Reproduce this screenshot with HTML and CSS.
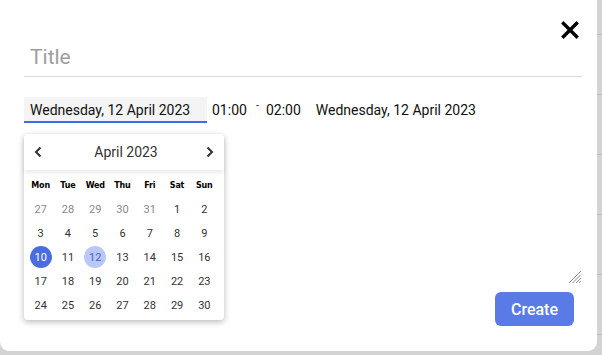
FILE: index.html
```html
<!DOCTYPE html>
<html>
<head>
<meta charset="utf-8">
<link rel="stylesheet" href="styles.css">
</head>
<body>
<div class="modal">
  <div class="top">
    <svg class="close" width="18" height="18" viewBox="0 0 18 18"><path d="M2.5 2.5 L15.5 15.5 M15.5 2.5 L2.5 15.5" stroke="#000" stroke-width="3.4" stroke-linecap="square"/></svg>
  </div>
  <div class="title">Title</div>
  <div class="daterow">
    <div class="dateinput">Wednesday, 12 April 2023</div>
    <span class="time">01:00</span>
    <span class="dash">-</span>
    <span class="time">02:00</span>
    <span class="enddate">Wednesday, 12 April 2023</span>
  </div>
  <div class="body">
    <textarea class="desc"></textarea>
    <svg class="grip" width="14" height="14" viewBox="0 0 14 14"><path d="M13 1 L1 13 M13 4.5 L4.5 13 M13 8 L8 13 M13 11 L11 13" stroke="#8a8a8a" stroke-width="1"/></svg>
    <div class="cal">
      <div class="calhead">
        <svg width="8" height="12" viewBox="0 0 8 12"><path d="M6.5 1.5 L2 6 L6.5 10.5" fill="none" stroke="#333" stroke-width="2"/></svg>
        <span class="month">April 2023</span>
        <svg width="8" height="12" viewBox="0 0 8 12"><path d="M1.5 1.5 L6 6 L1.5 10.5" fill="none" stroke="#333" stroke-width="2"/></svg>
      </div>
      <div class="grid">
        <span class="wd">Mon</span><span class="wd">Tue</span><span class="wd">Wed</span><span class="wd">Thu</span><span class="wd">Fri</span><span class="wd">Sat</span><span class="wd">Sun</span>
        <span class="d o">27</span><span class="d o">28</span><span class="d o">29</span><span class="d o">30</span><span class="d o">31</span><span class="d">1</span><span class="d">2</span>
        <span class="d">3</span><span class="d">4</span><span class="d">5</span><span class="d">6</span><span class="d">7</span><span class="d">8</span><span class="d">9</span>
        <span class="d"><i class="sel">10</i></span><span class="d">11</span><span class="d"><i class="cur">12</i></span><span class="d">13</span><span class="d">14</span><span class="d">15</span><span class="d">16</span>
        <span class="d">17</span><span class="d">18</span><span class="d">19</span><span class="d">20</span><span class="d">21</span><span class="d">22</span><span class="d">23</span>
        <span class="d">24</span><span class="d">25</span><span class="d">26</span><span class="d">27</span><span class="d">28</span><span class="d">29</span><span class="d">30</span>
      </div>
    </div>
  </div>
  <div class="actions">
    <button class="create">Create</button>
  </div>
</div>
</body>
</html>
```

FILE: styles.css
```css
html, body {
  margin: 0;
  padding: 0;
}
body {
  width: 602px;
  height: 355px;
  overflow: hidden;
  font-family: Roboto, "Liberation Sans", sans-serif;
  background-color: #d3d3d3;
  background-image: repeating-linear-gradient(to bottom, transparent 0, transparent 34px, #bcbcbc 34px, #bcbcbc 35px, transparent 35px, transparent 60px);
}
.modal {
  width: 597px;
  height: 351px;
  background: #fff;
  border-radius: 0 0 9px 9px;
  box-sizing: border-box;
  padding: 20px 15px 0 24px;
  display: flex;
  flex-direction: column;
}
.top {
  display: flex;
  justify-content: flex-end;
  height: 18px;
  padding-right: 3px;
}
.close {
  display: block;
  margin-top: 1px;
}
.title {
  height: 39px;
  box-sizing: border-box;
  border-bottom: 1px solid #dcdcdc;
  padding-left: 6px;
  padding-top: 7px;
  font-size: 21px;
  line-height: 24px;
  color: #9e9e9e;
}
.daterow {
  display: flex;
  align-items: center;
  margin-top: 20px;
  height: 26px;
  font-size: 14px;
  color: #111;
}
.dateinput {
  width: 183px;
  height: 26px;
  box-sizing: border-box;
  background: #f4f4f4;
  border-bottom: 2px solid #4169e1;
  padding: 4px 0 0 6px;
  line-height: 18px;
}
.time {
  margin-left: 5px;
}
.dash {
  font-size: 11px;
  line-height: 11px;
  align-self: flex-start;
  margin: 0 7px 0 9px;
  padding-top: 3px;
  color: #333;
}
.dash + .time {
  margin-left: 0;
}
.enddate {
  margin-left: 15px;
}
.body {
  position: relative;
  height: 152px;
  margin-top: 10px;
}
.desc {
  display: block;
  width: 558px;
  height: 152px;
  border: none;
  outline: none;
  padding: 0;
  resize: none;
  font-family: inherit;
}
.grip {
  position: absolute;
  right: 0;
  bottom: 1px;
  display: block;
}
.cal {
  position: absolute;
  left: 0;
  top: 1px;
  width: 200px;
  height: 186px;
  background: #fff;
  border-radius: 4px;
  box-shadow: 0 2px 6px rgba(0,0,0,0.28);
  z-index: 2;
}
.calhead {
  height: 36px;
  display: flex;
  align-items: center;
  justify-content: space-between;
  padding: 0 10px 0 10px;
  box-shadow: 0 3px 5px rgba(0,0,0,0.08);
  border-radius: 4px 4px 0 0;
}
.month {
  font-size: 14px;
  color: #333;
  margin-left: 4px;
}
.grid {
  display: grid;
  grid-template-columns: repeat(7, 1fr);
  grid-auto-rows: 24px;
  padding: 3px 6px 0 3px;
}
.wd {
  font-size: 8px;
  color: #000;
  display: flex;
  align-items: center;
  justify-content: center;
  height: 24px;
  letter-spacing: -0.2px;
  font-family: "DejaVu Sans", sans-serif;
  font-weight: bold;
}
.d {
  font-size: 11px;
  color: #333;
  display: flex;
  align-items: center;
  justify-content: center;
}
.d.o {
  color: #8a8a8a;
}
.d i {
  font-style: normal;
  width: 22px;
  height: 22px;
  border-radius: 50%;
  display: flex;
  align-items: center;
  justify-content: center;
}
.sel {
  background: #4a6ee0;
  color: #fff;
}
.cur {
  background: #b9c8f8;
  color: #4561c9;
}
.actions {
  display: flex;
  justify-content: flex-end;
  margin-top: 7px;
  padding-right: 8px;
}
.create {
  width: 79px;
  height: 34px;
  border: none;
  border-radius: 6px;
  background: #5a7be6;
  color: #fff;
  font-family: Roboto, "Liberation Sans", sans-serif;
  font-size: 16px;
  font-weight: 500;
}
```
